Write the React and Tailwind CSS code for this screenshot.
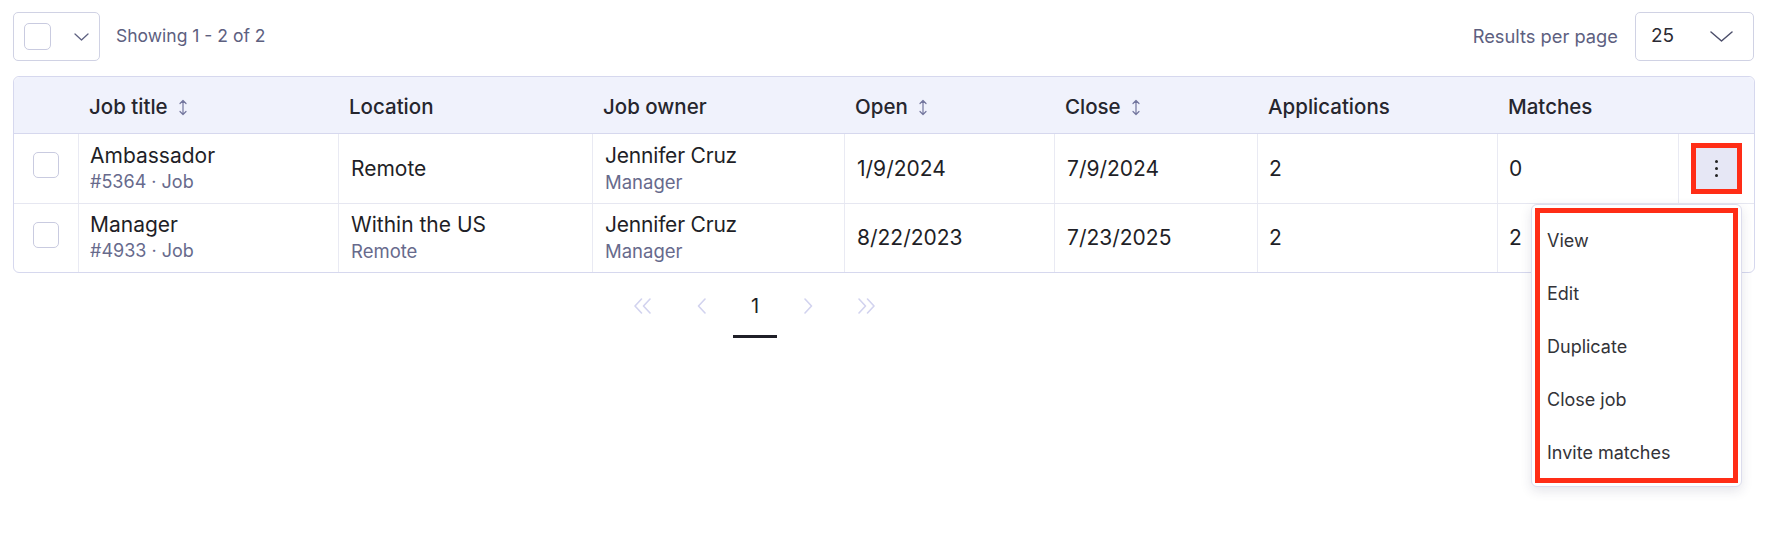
import React from "react";

const jobs = [
  {
    id: 5364,
    title: "Ambassador",
    location: "Remote",
    locationSub: "",
    owner: "Jennifer Cruz",
    ownerRole: "Manager",
    open: "1/9/2024",
    close: "7/9/2024",
    applications: 2,
    matches: 0,
  },
  {
    id: 4933,
    title: "Manager",
    location: "Within the US",
    locationSub: "Remote",
    owner: "Jennifer Cruz",
    ownerRole: "Manager",
    open: "8/22/2023",
    close: "7/23/2025",
    applications: 2,
    matches: 2,
  },
];

const menuItems = ["View", "Edit", "Duplicate", "Close job", "Invite matches"];

const SortIcon = () => (
  <svg width="12" height="17" viewBox="0 0 12 17" fill="none" className="ml-[9px]">
    <path
      d="M6 1.5v14M3 4.5 6 1.5 9 4.5M3 12.5 6 15.5 9 12.5"
      stroke="#73769e"
      strokeWidth="1.2"
      strokeLinecap="round"
      strokeLinejoin="round"
    />
  </svg>
);

const Chevron = ({ w, h, color, sw = 1.5 }) => (
  <svg width={w} height={h} viewBox={`0 0 ${w} ${h}`} fill="none">
    <path
      d={`M1 1 ${w / 2} ${h - 1} ${w - 1} 1`}
      stroke={color}
      strokeWidth={sw}
      strokeLinecap="round"
      strokeLinejoin="round"
    />
  </svg>
);

const Checkbox = () => (
  <div className="w-[26px] h-[26px] rounded-[5px] border border-[#c9cbe0] bg-white" />
);

const HeaderCell = ({ children, sort }) => (
  <div className="flex items-center px-[11px] pt-[4px] text-[20.5px] font-medium text-[#26262e]">
    {children}
    {sort && <SortIcon />}
  </div>
);

const cols = "grid grid-cols-[64px_260px_254px_252px_210px_203px_240px_181px_76px]";

export default function App() {
  return (
    <div className="w-[1778px] h-[538px] bg-white" style={{ fontFamily: "Inter, 'Noto Sans', sans-serif" }}>
      {/* top bar */}
      <div className="flex items-center justify-between pl-[13px] pr-[24px] pt-[12px]">
        <div className="flex items-center">
          <div className="flex items-center w-[87px] h-[49px] border border-[#d0d2e4] rounded-[5px] pl-[10px]">
            <div className="w-[27px] h-[27px] rounded-[5px] border border-[#c9cbe0]" />
            <div className="ml-[23px]">
              <Chevron w={15} h={8} color="#5f6282" sw={1.3} />
            </div>
          </div>
          <span className="ml-[16px] text-[17.5px] text-[#5d607f]">Showing 1 - 2 of 2</span>
        </div>
        <div className="flex items-center">
          <span className="text-[18.3px] text-[#5d607f]">Results per page</span>
          <div className="ml-[17px] flex items-center justify-between w-[119px] h-[49px] border border-[#d0d2e4] rounded-[5px] pl-[15px] pr-[20px]">
            <span className="text-[19px] text-[#2a2a33]">25</span>
            <Chevron w={23} h={11} color="#4c4e6a" sw={1.5} />
          </div>
        </div>
      </div>

      {/* table */}
      <div className="relative ml-[13px] mt-[15px] w-[1742px] border border-[#d6d8ee] rounded-[6px]">
        <div className={`${cols} h-[57px] bg-[#f0f2fc] rounded-t-[6px] border-b border-[#d6d8ee]`}>
          <div />
          <HeaderCell sort>Job title</HeaderCell>
          <HeaderCell>Location</HeaderCell>
          <HeaderCell>Job owner</HeaderCell>
          <HeaderCell sort>Open</HeaderCell>
          <HeaderCell sort>Close</HeaderCell>
          <HeaderCell>Applications</HeaderCell>
          <HeaderCell>Matches</HeaderCell>
          <div />
        </div>

        {jobs.map((job, i) => (
          <div
            key={job.id}
            className={`${cols} h-[69px] text-[21px] text-[#1f1f27] ${i > 0 ? "border-t border-[#e6e7f1]" : ""}`}
          >
            <div className="flex justify-center pt-[18px]">
              <Checkbox />
            </div>
            <div className="flex flex-col justify-center px-[11px] border-l border-[#e9eaf3]">
              <span className="leading-[26px]">{job.title}</span>
              <span className="text-[18px] leading-[26px] text-[#676a8c]">#{job.id} · Job</span>
            </div>
            <div className="flex flex-col justify-center px-[12px] border-l border-[#e9eaf3]">
              <span className="leading-[26px]">{job.location}</span>
              {job.locationSub && (
                <span className="text-[18.5px] leading-[26px] text-[#676a8c]">{job.locationSub}</span>
              )}
            </div>
            <div className="flex flex-col justify-center px-[12px] border-l border-[#e9eaf3]">
              <span className="leading-[26px] tracking-[-0.2px]">{job.owner}</span>
              <span className="text-[18.5px] leading-[26px] text-[#676a8c]">{job.ownerRole}</span>
            </div>
            <div className="flex items-center px-[12px] border-l border-[#e9eaf3]">{job.open}</div>
            <div className="flex items-center px-[12px] border-l border-[#e9eaf3]">{job.close}</div>
            <div className="flex items-center px-[11px] border-l border-[#e9eaf3]">{job.applications}</div>
            <div className="flex items-center px-[11px] border-l border-[#e9eaf3]">{job.matches}</div>
            <div className="flex items-center justify-end pr-[12px] border-l border-[#e9eaf3]">
              {i === 0 && (
                <div className="relative">
                  <button className="flex flex-col items-center justify-center gap-[4px] w-[51px] h-[51px] bg-[#e6e7f5] border-[5px] border-[#ff2d16]">
                    <span className="w-[3px] h-[3px] rounded-full bg-[#222]" />
                    <span className="w-[3px] h-[3px] rounded-full bg-[#222]" />
                    <span className="w-[3px] h-[3px] rounded-full bg-[#222]" />
                  </button>
                  <div className="absolute right-0 top-[61px] z-10 w-[211px] bg-white border border-[#dcdded] rounded-[6px] shadow-[0_4px_12px_rgba(40,40,80,0.12)] pt-[9px] pb-[7px]">
                    {menuItems.map((item) => (
                      <div key={item} className="h-[53px] flex items-center pl-[15px] text-[18px] text-[#333338]">
                        {item}
                      </div>
                    ))}
                    <div className="absolute inset-[3px] border-[5px] border-[#ff2d16] pointer-events-none" />
                  </div>
                </div>
              )}
            </div>
          </div>
        ))}
      </div>

      {/* pagination */}
      <div className="flex items-start ml-[620px] mt-[4px]">
        <div className="w-[44px] h-[58px] flex items-center justify-start pl-[13px]">
          <svg width="19" height="16" viewBox="0 0 19 16" fill="none">
            <path d="M8.5 1 2 8l6.5 7M17 1l-6.5 7 6.5 7" stroke="#d2d3ef" strokeWidth="1.6" strokeLinecap="round" strokeLinejoin="round" />
          </svg>
        </div>
        <div className="ml-[15px] w-[44px] h-[58px] flex items-center justify-center">
          <svg width="11" height="16" viewBox="0 0 11 16" fill="none">
            <path d="M9 1 2.5 8 9 15" stroke="#d2d3ef" strokeWidth="1.6" strokeLinecap="round" strokeLinejoin="round" />
          </svg>
        </div>
        <div className="ml-[10px] w-[44px] h-[61px] border-b-[3px] border-[#1f1f27] flex items-center justify-center text-[20px] text-[#1f1f27]">
          1
        </div>
        <div className="ml-[9px] w-[44px] h-[58px] flex items-center justify-center">
          <svg width="11" height="16" viewBox="0 0 11 16" fill="none">
            <path d="M2 1l6.5 7L2 15" stroke="#d2d3ef" strokeWidth="1.6" strokeLinecap="round" strokeLinejoin="round" />
          </svg>
        </div>
        <div className="ml-[15px] w-[44px] h-[58px] flex items-center justify-end pr-[13px]">
          <svg width="19" height="16" viewBox="0 0 19 16" fill="none">
            <path d="M2 1l6.5 7L2 15M10.5 1 17 8l-6.5 7" stroke="#d2d3ef" strokeWidth="1.6" strokeLinecap="round" strokeLinejoin="round" />
          </svg>
        </div>
      </div>
    </div>
  );
}
